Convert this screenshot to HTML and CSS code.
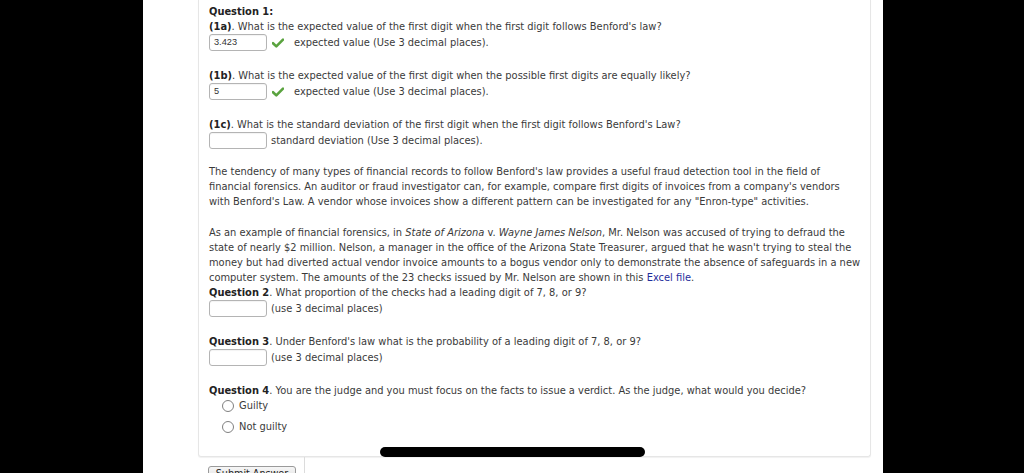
FILE: index.html
```html
<!DOCTYPE html>
<html>
<head>
<meta charset="utf-8">
<link rel="stylesheet" href="styles.css">
</head>
<body>
<div class="screen">
  <div class="panel">
    <div class="title">Question 1:</div>

    <div class="part">
      <div class="qline"><b>(1a)</b>. What is the expected value of the first digit when the first digit follows Benford's law?</div>
      <div class="answer-row">
        <span class="field">3.423</span>
        <svg class="check" width="12" height="10" viewBox="0 0 12 10"><path d="M1 5.2 L4.3 8.4 L11 1.6" fill="none" stroke="#5aa33f" stroke-width="2.6" stroke-linecap="round" stroke-linejoin="round"/></svg>
        <span class="unit unit-checked">expected value (Use 3 decimal places).</span>
      </div>
    </div>

    <div class="part">
      <div class="qline"><b>(1b)</b>. What is the expected value of the first digit when the possible first digits are equally likely?</div>
      <div class="answer-row">
        <span class="field">5</span>
        <svg class="check" width="12" height="10" viewBox="0 0 12 10"><path d="M1 5.2 L4.3 8.4 L11 1.6" fill="none" stroke="#5aa33f" stroke-width="2.6" stroke-linecap="round" stroke-linejoin="round"/></svg>
        <span class="unit unit-checked">expected value (Use 3 decimal places).</span>
      </div>
    </div>

    <div class="part part-last">
      <div class="qline"><b>(1c)</b>. What is the standard deviation of the first digit when the first digit follows Benford's Law?</div>
      <div class="answer-row">
        <span class="field"></span>
        <span class="unit">standard deviation (Use 3 decimal places).</span>
      </div>
    </div>

    <p class="para">The tendency of many types of financial records to follow Benford's law provides a useful fraud detection tool in the field of financial forensics. An auditor or fraud investigator can, for example, compare first digits of invoices from a company's vendors with Benford's Law. A vendor whose invoices show a different pattern can be investigated for any "Enron-type" activities.</p>

    <p class="para para-last">As an example of financial forensics, in <i>State of Arizona</i> v. <i>Wayne James Nelson</i>, Mr. Nelson was accused of trying to defraud the state of nearly $2 million. Nelson, a manager in the office of the Arizona State Treasurer, argued that he wasn't trying to steal the money but had diverted actual vendor invoice amounts to a bogus vendor only to demonstrate the absence of safeguards in a new computer system. The amounts of the 23 checks issued by Mr. Nelson are shown in this <a class="link" href="#">Excel file</a>.</p>

    <div class="part">
      <div class="qline"><b>Question 2</b>. What proportion of the checks had a leading digit of 7, 8, or 9?</div>
      <div class="answer-row">
        <span class="field"></span>
        <span class="unit">(use 3 decimal places)</span>
      </div>
    </div>

    <div class="part">
      <div class="qline"><b>Question 3</b>. Under Benford's law what is the probability of a leading digit of 7, 8, or 9?</div>
      <div class="answer-row">
        <span class="field"></span>
        <span class="unit">(use 3 decimal places)</span>
      </div>
    </div>

    <div class="part part-radio">
      <div class="qline"><b>Question 4</b>. You are the judge and you must focus on the facts to issue a verdict. As the judge, what would you decide?</div>
      <div class="options">
        <label class="option"><span class="radio"></span>Guilty</label>
        <label class="option"><span class="radio"></span>Not guilty</label>
      </div>
    </div>
  </div>

  <div class="footer">
    <div class="footer-left"><button class="submit">Submit Answer</button></div>
    <div class="footer-right"></div>
  </div>

  <div class="home-indicator"></div>
</div>
</body>
</html>
```

FILE: styles.css
```css
html, body {
  margin: 0;
  padding: 0;
  background: #000;
}

.screen {
  position: relative;
  width: 740px;
  height: 473px;
  margin-left: 143px;
  background: #fff;
  overflow: hidden;
  font-family: "DejaVu Sans", Verdana, sans-serif;
  font-size: 9.9px;
  line-height: 15px;
  color: #3a3a3a;
}

.panel {
  width: 653px;
  margin-left: 55px;
  padding: 4px 8px 21px 10px;
  border: 1px solid #e6e6e6;
  border-top: none;
  border-radius: 0 0 3px 3px;
  box-shadow: 0 1px 1px rgba(0, 0, 0, 0.06);
}

.title {
  font-weight: bold;
  color: #222;
}

.qline b {
  color: #222;
}

.part {
  margin-bottom: 17px;
}

.part-last {
  margin-bottom: 15px;
}

.answer-row {
  display: flex;
  align-items: center;
  height: 17px;
}

.field {
  box-sizing: border-box;
  width: 58px;
  height: 17px;
  border: 1px solid #b4b4b4;
  border-radius: 3px;
  padding: 0 4px;
  font-family: "Liberation Sans", Arial, sans-serif;
  font-size: 9.2px;
  line-height: 15px;
  color: #333;
  box-shadow: inset 0 1px 1px rgba(0, 0, 0, 0.05);
}

.check {
  margin-left: 5px;
  flex: none;
}

.unit {
  margin-left: 4px;
}

.unit-checked {
  margin-left: 10px;
}

.para {
  margin: 0 0 15.5px 0;
}

.para-last {
  margin-bottom: 0;
}

.link {
  color: #1f2d9c;
  text-decoration: none;
}

.part-radio {
  margin-bottom: 0;
}

.options {
  display: flex;
  flex-direction: column;
  gap: 5px;
  padding-left: 13px;
}

.option {
  display: flex;
  align-items: center;
  height: 16px;
}

.radio {
  box-sizing: border-box;
  width: 12px;
  height: 12px;
  border: 1px solid #808080;
  border-radius: 50%;
  margin-right: 5px;
  background: #fff;
}

.footer {
  display: flex;
  margin-left: 55px;
  height: 30px;
}

.footer-left {
  width: 106px;
  padding: 9px 0 0 10px;
  box-sizing: border-box;
}

.footer-right {
  flex: 1;
  border-left: 1px solid #dcdcdc;
}

.submit {
  display: block;
  width: 88px;
  height: 16px;
  padding: 0;
  font-family: "DejaVu Sans", Verdana, sans-serif;
  font-size: 9.6px;
  line-height: 12px;
  color: #222;
  border: 1px solid #9a9a9a;
  border-radius: 3px;
  background: linear-gradient(#f6f6f6, #dedede);
}

.home-indicator {
  position: absolute;
  left: 237px;
  top: 447px;
  width: 265px;
  height: 10px;
  border-radius: 5px;
  background: #000;
}
```
